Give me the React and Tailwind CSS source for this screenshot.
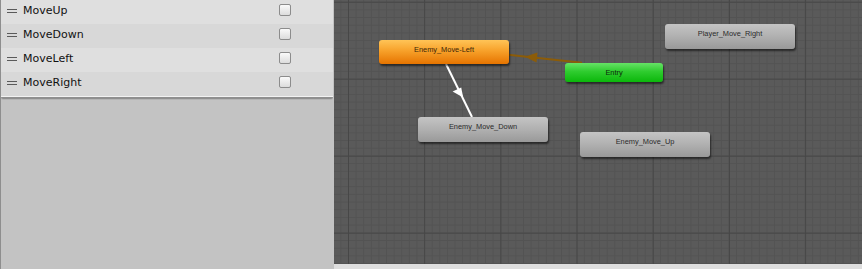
import React from "react";

const rows = ["MoveUp", "MoveDown", "MoveLeft", "MoveRight"];

function Row({ label, i }) {
  return (
    <div
      className={`flex h-[24px] items-start pt-[4px] ${
        i % 2 === 0 ? "bg-[#dfdfdf]" : "bg-[#d8d8d8]"
      }`}
    >
      <div className="ml-[6px] mt-[5px] flex h-[4px] w-[10px] flex-col justify-between">
        <div className="h-[1px] w-full bg-[#5a5a5a]" />
        <div className="h-[1px] w-full bg-[#5a5a5a]" />
      </div>
      <span className="ml-[6px] text-[11px] leading-[13px] text-[#111] [font-family:'DejaVu_Sans',sans-serif]">
        {label}
      </span>
      <div className="ml-auto mr-[42px] h-[12px] w-[12px] rounded-[2px] border border-[#8c8c8c] bg-[linear-gradient(#fafafa,#dcdcdc)]" />
    </div>
  );
}

function Node({ x, y, w, h, label, kind }) {
  const bg =
    kind === "orange"
      ? "bg-[linear-gradient(#ffc457,#f7a12a_45%,#e67400)] text-[#3a2608]"
      : kind === "green"
      ? "bg-[linear-gradient(#66e266,#2fcc2f_45%,#0bb70b)] text-[#0b2a0b]"
      : "bg-[linear-gradient(#c4c4c4,#b0b0b0_50%,#999999)] text-[#2a2a2a]";
  return (
    <div
      className={`absolute flex items-center justify-center rounded-[3px] shadow-[1px_2px_2px_rgba(0,0,0,0.55)] ${bg} ${
        kind === "green" ? "" : "pb-[5px]"
      }`}
      style={{ left: x, top: y, width: w, height: h }}
    >
      <span className="text-[7.4px] leading-[8px] [font-family:'Liberation_Sans',Arial,sans-serif]">
        {label}
      </span>
    </div>
  );
}

export default function App() {
  return (
    <div className="flex h-[269px] w-[862px] overflow-hidden bg-[#c3c3c3]">
      {/* Left column */}
      <div className="flex h-full w-[334px] shrink-0 flex-col border-l border-[#8e8e8e] bg-[#c3c3c3]">
        <div className="w-[332px] rounded-b-[2px] border-b-[2px] border-[#8f8f8f] shadow-[0_1px_0_#b5b5b5]">
          {rows.map((r, i) => (
            <Row key={r} label={r} i={i} />
          ))}
          <div className="h-[1px] bg-[#f2f2f2]" />
        </div>
      </div>

      {/* Right column: graph */}
      <div className="flex h-full flex-1 flex-col">
        <div className="relative h-[264px] w-full bg-[#5a5a5a] [background-image:linear-gradient(to_right,#474747_1px,transparent_1px),linear-gradient(to_bottom,#474747_1px,transparent_1px),linear-gradient(to_right,#535353_1px,transparent_1px),linear-gradient(to_bottom,#535353_1px,transparent_1px)] [background-size:76.2px_77px,76.2px_77px,7.62px_7.7px,7.62px_7.7px] [background-position:14px_1.7px]">
          <svg
            className="absolute inset-0"
            width="528"
            height="264"
            viewBox="334 0 528 264"
          >
            {/* Entry -> Enemy_Move-Left */}
            <line
              x1="582"
              y1="62.7"
              x2="508"
              y2="54.8"
              stroke="#8c5c08"
              strokeWidth="2"
            />
            <polygon
              points="525,56.8 537.5,52.6 536.5,62.6"
              fill="#8c5c08"
            />
            {/* Enemy_Move-Left -> Enemy_Move_Down */}
            <line
              x1="446"
              y1="64"
              x2="472"
              y2="117"
              stroke="#ffffff"
              strokeWidth="2"
            />
            <polygon
              points="463.2,97.5 452.6,91.6 461.2,87.4"
              fill="#ffffff"
            />
          </svg>
          <Node x={331} y={24} w={130} h={25} label="Player_Move_Right" kind="grey" />
          <Node x={45} y={40} w={130} h={24} label="Enemy_Move-Left" kind="orange" />
          <Node x={231} y={63} w={98} h={19} label="Entry" kind="green" />
          <Node x={84} y={117} w={130} h={25} label="Enemy_Move_Down" kind="grey" />
          <Node x={246} y={132} w={130} h={25} label="Enemy_Move_Up" kind="grey" />
        </div>
        <div className="h-[5px] w-full bg-[#dedede]" />
      </div>
    </div>
  );
}
